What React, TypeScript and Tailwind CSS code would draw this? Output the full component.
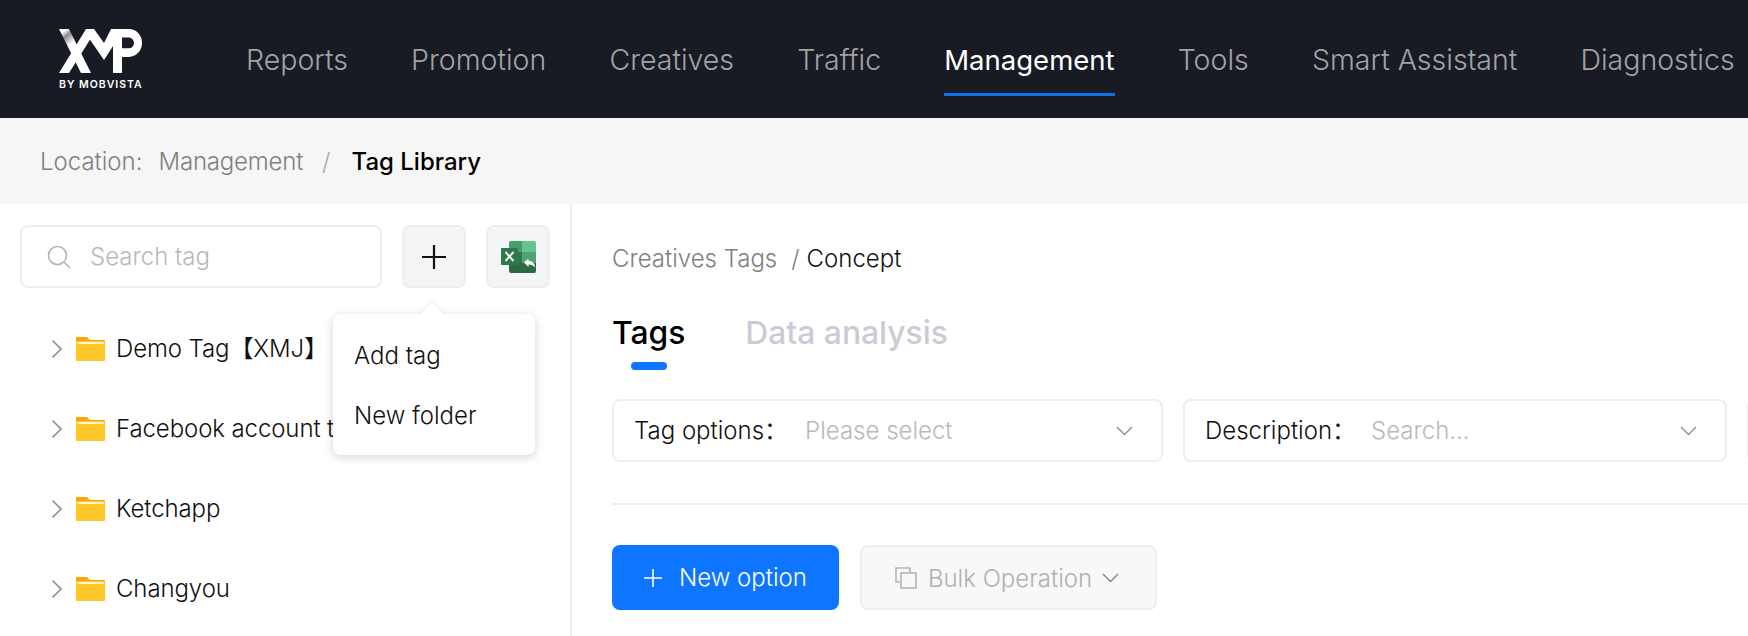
import React from "react";

const navItems = ["Reports", "Promotion", "Creatives", "Traffic", "Management", "Tools", "Smart Assistant", "Diagnostics"];
const rows = ["Demo Tag【XMJ】", "Facebook account test", "Ketchapp", "Changyou"];

function Logo() {
  return (
    <div className="flex w-[84px] flex-col">
      <svg width="84" height="44" viewBox="0 0 84 41" preserveAspectRatio="none" className="block">
        <defs>
          <linearGradient id="xg" x1="0" y1="0" x2="0.6" y2="1">
            <stop offset="0.1" stopColor="#ffffff" />
            <stop offset="0.22" stopColor="#8a8a8f" />
            <stop offset="0.42" stopColor="#ffffff" />
          </linearGradient>
        </defs>
        <polygon points="0,0 10,0 32,41 22,41" fill="url(#xg)" />
        <polygon points="0,41 10,41 31,10 45,29 56,13 59,0 52,0 45,13 35,0 27,0" fill="#fff" />
        <path
          fillRule="evenodd"
          d="M54 0H70A13 13 0 0 1 70 26H63V41H54ZM63 8V18H70A5 5 0 0 0 70 8Z"
          fill="#fff"
        />
      </svg>
      <div className="mt-[6px] whitespace-nowrap text-[10.5px] font-semibold leading-[12px] tracking-[1px] text-white">BY MOBVISTA</div>
    </div>
  );
}

function Chevron() {
  return (
    <svg width="12" height="20" viewBox="0 0 12 20" fill="none" stroke="#8c8c8c" strokeWidth="1.6">
      <path d="M1.5 1.5 10 10 1.5 18.5" />
    </svg>
  );
}

function Folder() {
  return (
    <svg width="29" height="24" viewBox="0 0 29 24">
      <path d="M1 0H11L14 3H28A1 1 0 0 1 29 4V10H0V1A1 1 0 0 1 1 0Z" fill="#ffa10a" />
      <rect x="0" y="4" width="29" height="20" rx="1" fill="#ffc828" />
      <rect x="1.5" y="5" width="26" height="2" fill="#fff3cf" />
    </svg>
  );
}

function Down({ color = "#8c8c8c" }: { color?: string }) {
  return (
    <svg width="17" height="10" viewBox="0 0 17 10" fill="none" stroke={color} strokeWidth="1.3">
      <path d="M1 1 8.5 8.5 16 1" />
    </svg>
  );
}

function Excel() {
  return (
    <svg width="35" height="32" viewBox="0 0 35 32">
      <path d="M10 0H21V11H8V2A2 2 0 0 1 10 0Z" fill="#479e6c" />
      <path d="M21 0H33A2 2 0 0 1 35 2V11H21Z" fill="#68c48e" />
      <rect x="8" y="11" width="13" height="11" fill="#2e7a4c" />
      <rect x="21" y="11" width="14" height="11" fill="#4fa374" />
      <path d="M8 22H35V30A2 2 0 0 1 33 32H10A2 2 0 0 1 8 30Z" fill="#2d6a42" />
      <rect x="0" y="7" width="17" height="17" rx="1" fill="#2f7a4c" />
      <path d="M4.5 11 12.5 20M12.5 11 4.5 20" stroke="#fff" strokeWidth="1.9" fill="none" />
      <path d="M23 21.5 27.5 17.5V20C31 20 34 22 34 26.5 32.5 24.5 30.5 23.5 27.5 23.5V26Z" fill="#fff" />
    </svg>
  );
}

function FilterBox({ label, placeholder, width, gap }: { label: string; placeholder: string; width: string; gap: string }) {
  return (
    <div className={`flex h-[63px] shrink-0 items-center rounded-lg border-2 border-[#eeeeee] pl-[20px] pr-[28px] text-[24px] font-light ${width}`}>
      <span className="whitespace-nowrap font-[350] text-[#111111]">{label}</span>
      <span className={`whitespace-nowrap text-[#b9b9b9] ${gap}`}>{placeholder}</span>
      <span className="ml-auto flex">
        <Down />
      </span>
    </div>
  );
}

export default function App() {
  return (
    <div className="h-[636px] w-[1748px] overflow-hidden bg-white font-['Inter','Noto_Sans_CJK_SC',sans-serif]">
      <header className="flex h-[118px] bg-[#181b24]">
        <div className="w-[246px] shrink-0 pl-[59px] pt-[29px]">
          <Logo />
        </div>
        <nav className="flex items-start gap-[63.2px]">
          {navItems.map((n) => (
            <div
              key={n}
              className={`flex h-[96px] items-center whitespace-nowrap border-b-[3px] pt-[28px] ${
                n === "Management"
                  ? "border-[#0f6fe8] text-[27.5px] font-normal text-white"
                  : "border-transparent text-[28.5px] font-light text-[#a3a3a3]"
              }`}
            >
              {n}
            </div>
          ))}
        </nav>
      </header>

      <div className="flex h-[86px] items-center whitespace-nowrap bg-[#f6f6f6] pl-[40px] pt-[2px] text-[24px]">
        <span className="font-light text-[#808080]">Location:</span>
        <span className="ml-[16px] font-light tracking-[-0.2px] text-[#808080]">Management</span>
        <span className="ml-[19px] font-light text-[#a8a8a8]">/</span>
        <span className="ml-[21px] font-medium text-black">Tag Library</span>
      </div>

      <div className="flex h-[432px]">
        <aside className="relative w-[572px] shrink-0 border-r-2 border-[#eeeeee]">
          <div className="flex pl-[20px] pt-[21px]">
            <div className="flex h-[63px] w-[362px] items-center rounded-lg border-2 border-[#eeeeee] pl-[25px] text-[24px] font-light text-[#b9b9b9]">
              <svg width="24" height="24" viewBox="0 0 24 24" fill="none" stroke="#b4b4b4" strokeWidth="1.6">
                <circle cx="10.5" cy="10.5" r="9" />
                <path d="M17 17 23 23" />
              </svg>
              <span className="ml-[19px]">Search tag</span>
            </div>
            <div className="ml-[20px] flex h-[63px] w-[64px] items-center justify-center rounded-lg border-2 border-[#eeeeee] bg-[#f4f5f7]">
              <svg width="24" height="24" viewBox="0 0 24 24" stroke="#111" strokeWidth="2.2">
                <path d="M12 0V24M0 12H24" />
              </svg>
            </div>
            <div className="ml-[20px] flex h-[63px] w-[64px] items-center justify-center rounded-lg border-2 border-[#eeeeee] bg-[#f4f5f7]">
              <Excel />
            </div>
          </div>

          <ul className="mt-[20px]">
            {rows.map((r) => (
              <li key={r} className="flex h-[80px] items-center whitespace-nowrap pl-[51px] pt-[2px] text-[24px] font-[350] tracking-[-0.1px] text-[#111111]">
                <Chevron />
                <span className="ml-[13px] flex">
                  <Folder />
                </span>
                <span className="ml-[11px]">{r}</span>
              </li>
            ))}
          </ul>

          <div className="absolute left-[333px] top-[110px] h-[141px] w-[202px] rounded-lg bg-white pl-[21px] pt-[12px] text-[24px] font-[350] leading-[60px] text-[#111111] shadow-[0_2px_10px_rgba(0,0,0,0.18)]">
            <span className="absolute left-[90px] top-[-8px] h-[18px] w-[18px] rotate-45 bg-white shadow-[-2px_-2px_4px_rgba(0,0,0,0.05)]" />
            <div className="relative">Add tag</div>
            <div className="relative">New folder</div>
          </div>
        </aside>

        <main className="min-w-0 flex-1 overflow-hidden pl-[40px]">
          <div className="mt-[40px] flex h-[30px] items-center whitespace-nowrap text-[24px]">
            <span className="font-light text-[#808080]">Creatives Tags</span>
            <span className="ml-[14px] font-light text-[#808080]">/</span>
            <span className="ml-[7px] font-[350] text-[#111111]">Concept</span>
          </div>

          <div className="mt-[39px] flex h-[46px] items-start whitespace-nowrap text-[31.8px] font-[550] leading-[40px]">
            <div className="relative text-black">
              Tags
              <span className="absolute left-[19px] top-[49px] h-[8px] w-[36px] rounded-full bg-[#0d75ff]" />
            </div>
            <div className="ml-[60px] text-[#c9ccd4]">Data analysis</div>
          </div>

          <div className="mt-[40px] flex gap-[20px]">
            <FilterBox label="Tag options：" placeholder="Please select" width="w-[551px]" gap="ml-[17px]" />
            <FilterBox label="Description：" placeholder="Search..." width="w-[544px]" gap="ml-[15px]" />
            <div className="h-[63px] w-[100px] shrink-0 rounded-lg border-2 border-[#eeeeee]" />
          </div>

          <div className="mt-[41px] h-[2px] bg-[#eeeeee]" />

          <div className="mt-[40px] flex gap-[21px]">
            <button className="flex h-[65px] w-[227px] items-center justify-center rounded-lg bg-[#0d75ff] text-[24px] font-light text-white">
              <svg width="18" height="18" viewBox="0 0 18 18" stroke="#fff" strokeWidth="1.6">
                <path d="M9 0V18M0 9H18" />
              </svg>
              <span className="ml-[17px]">New option</span>
            </button>
            <button className="flex h-[65px] w-[297px] items-center justify-center rounded-lg border-2 border-[#eeeeee] bg-[#f8f8f8] pr-[3px] text-[24px] font-light text-[#b0b0b0]">
              <svg width="22" height="22" viewBox="0 0 22 22" fill="none" stroke="#b4b4b4" strokeWidth="1.6">
                <path d="M5 15H1V1H15V5" />
                <rect x="6" y="6" width="15" height="15" />
              </svg>
              <span className="ml-[11px] pt-[2px]">Bulk Operation</span>
              <span className="ml-[10px] flex">
                <Down color="#808080" />
              </span>
            </button>
          </div>
        </main>
      </div>
    </div>
  );
}
